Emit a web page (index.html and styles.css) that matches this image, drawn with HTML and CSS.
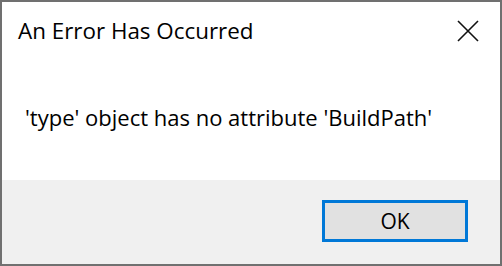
FILE: index.html
```html
<!DOCTYPE html>
<html>
<head>
<meta charset="utf-8">
<link rel="stylesheet" href="styles.css">
</head>
<body>
<div class="dialog">
  <div class="content">
    <div class="titlebar">
      <div class="title">An Error Has Occurred</div>
      <div class="close">
        <svg width="22" height="22" viewBox="0 0 22 22"><path d="M1 1 L21 21 M21 1 L1 21" stroke="#111" stroke-width="1.6" fill="none"/></svg>
      </div>
    </div>
    <div class="message">'type' object has no attribute 'BuildPath'</div>
  </div>
  <div class="footer">
    <button class="ok">OK</button>
  </div>
</div>
</body>
</html>
```
FILE: styles.css
```css
html, body {
  margin: 0;
  padding: 0;
}
body {
  width: 502px;
  height: 266px;
  font-family: "Open Sans", "Noto Sans", sans-serif;
}
.dialog {
  box-sizing: border-box;
  width: 502px;
  height: 266px;
  border: 2px solid #707070;
  display: flex;
  flex-direction: column;
  background: #fff;
}
.content {
  height: 178px;
  background: #fff;
}
.titlebar {
  display: flex;
  justify-content: space-between;
  align-items: flex-start;
  padding: 14px 21px 0 16px;
}
.title {
  font-size: 22.4px;
  color: #000;
  line-height: 30px;
}
.close {
  margin-top: 4px;
  width: 22px;
  height: 22px;
}
.close svg {
  display: block;
}
.message {
  padding: 56px 0 0 23px;
  font-size: 22px;
  line-height: 30px;
  color: #000;
}
.footer {
  flex: 1;
  background: #f0f0f0;
  display: flex;
  justify-content: flex-end;
  align-items: flex-start;
  padding: 20px 32px 0 0;
}
.ok {
  box-sizing: border-box;
  width: 146px;
  height: 42px;
  border: 3px solid #0078d7;
  background: #e1e1e1;
  font-family: "Open Sans", "Noto Sans", sans-serif;
  font-size: 21px;
  color: #000;
  padding: 0;
}
```
